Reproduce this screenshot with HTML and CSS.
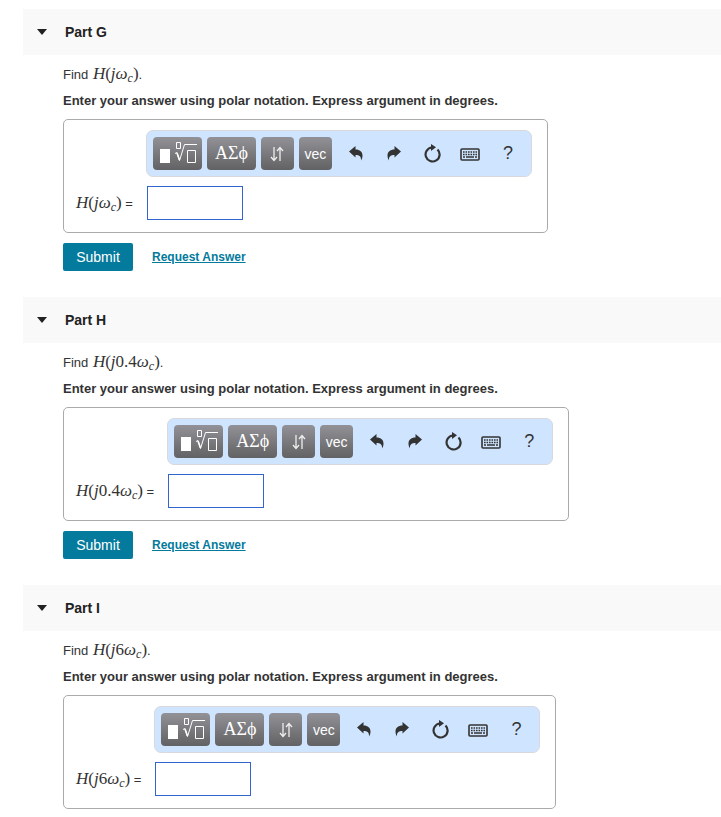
FILE: index.html
```html
<!DOCTYPE html>
<html lang="en">
<head>
<meta charset="utf-8">
<meta name="viewport" content="width=device-width, initial-scale=1">
<title>Transfer function</title>
<link rel="stylesheet" href="styles.css">
</head>
<body>
<svg width="0" height="0" class="sprite" aria-hidden="true">
  <symbol id="i-root" viewBox="0 0 39 25">
    <rect x="2" y="8" width="10" height="14" fill="#fff"/>
    <path d="M18.500 1.500h4v6h-4zM29.500 9.500h8v12h-8zM17 12.500l2-1 2.500 8L26.500 3.500H39" fill="none" stroke="#fff"/>
    <path d="M19 12l2.500 7" stroke="#fff" stroke-width="1.600"/>
  </symbol>
  <symbol id="i-arrows" viewBox="0 0 16 18">
    <path d="M5 2v13M2 12l3 3.500L8 12M11 16V3M8 6l3-3.500L14 6" fill="none" stroke="#eee" stroke-width="1.300"/>
  </symbol>
  <symbol id="i-undo" viewBox="0 0 18 18">
    <path d="M2 6.500L8.500 1v3.500c4.500 0 7 2.500 7 6 0 2-.5 3.500-1.500 5 .3-4-1.500-5.500-5.500-5.500v2.500z"/>
  </symbol>
  <symbol id="i-reset" viewBox="0 0 18 20">
    <path d="M14.500 5.500A7 7 0 1 1 9 3.500" fill="none" stroke="#333" stroke-width="2.200"/>
    <path d="M8 0l5 3.300L8 7z"/>
  </symbol>
  <symbol id="i-keys" viewBox="0 0 20 14">
    <rect x="1" y="2" width="18" height="11" rx="1" fill="none" stroke="#333" stroke-width="1.600"/>
    <path d="M3 5h14M3 7.500h14" stroke="#333" stroke-width="1.400" stroke-dasharray="1.600 .9"/>
    <path d="M3 10h2M6 10h8M15 10h2" stroke="#333" stroke-width="1.500"/>
  </symbol>
</svg>
<main id="parts"></main>
<template id="part">
  <section class="part">
    <h2 class="part-head"><button type="button" class="toggle"><span class="caret"></span><span class="part-name"></span></button></h2>
    <div class="part-body">
      <p class="find">Find <span class="math"></span>.</p>
      <p class="hint">Enter your answer using polar notation. Express argument in degrees.</p>
      <div class="answer">
        <div class="toolbar">
          <button type="button" class="key wide" aria-label="Templates"><svg width="39" height="25"><use href="#i-root"/></svg></button>
          <button type="button" class="key wide greek">ΑΣϕ</button>
          <button type="button" class="key" aria-label="Subscript and superscript"><svg width="16" height="18"><use href="#i-arrows"/></svg></button>
          <button type="button" class="key">vec</button>
          <div class="tools">
            <button type="button" class="tool" aria-label="Undo"><svg width="18" height="18"><use href="#i-undo"/></svg></button>
            <button type="button" class="tool" aria-label="Redo"><svg class="flip" width="18" height="18"><use href="#i-undo"/></svg></button>
            <button type="button" class="tool" aria-label="Reset"><svg width="18" height="20"><use href="#i-reset"/></svg></button>
            <button type="button" class="tool" aria-label="Keyboard"><svg width="20" height="14"><use href="#i-keys"/></svg></button>
            <button type="button" class="tool">?</button>
          </div>
        </div>
        <label class="lhs"><span class="math"></span> =</label>
        <input class="entry" type="text">
      </div>
    </div>
  </section>
</template>
<template id="actions">
  <div class="actions">
    <button type="button" class="submit">Submit</button>
    <a class="request" href="#">Request Answer</a>
  </div>
</template>
<script src="parts.js"></script>
</body>
</html>
```
FILE: parts.js
```js
const parts = [["G", "", true], ["H", "0.4", true], ["I", "6", false]];
const template = document.getElementById("part");
const actions = document.getElementById("actions");
for (const [name, factor, hasActions] of parts) {
  const node = template.content.cloneNode(true);
  node.querySelector(".part-name").textContent = "Part " + name;
  for (const math of node.querySelectorAll(".math")) {
    math.innerHTML = `<i>H</i>(<i>j</i>${factor}<i>ω</i><sub>c</sub>)`;
  }
  node.querySelector(".entry").id = "answer-" + name;
  node.querySelector(".lhs").htmlFor = "answer-" + name;
  if (hasActions) {
    node.querySelector(".part-body").append(actions.content.cloneNode(true));
  }
  document.getElementById("parts").append(node);
}
```
FILE: styles.css
```css
* { box-sizing: border-box; }
body {
  margin: 0;
  padding: 9px 0 0 23px;
  font: 13px/18px "Liberation Sans", Arial, sans-serif;
  color: #333;
  background: #fff;
}
button { font-family: inherit; border: 0; padding: 0; cursor: pointer; }
.sprite { position: absolute; }
.part { margin-bottom: 26px; }
.part:last-child { margin-bottom: 0; }
.part-head { margin: 0; background: #f9f9f9; }
.toggle {
  display: flex;
  align-items: center;
  gap: 18px;
  width: 100%;
  height: 46px;
  padding-left: 14px;
  background: none;
  color: #222;
  font-size: 14px;
  font-weight: bold;
}
.caret { border: solid transparent; border-width: 6px 5px 0; border-top-color: #222; }
.part-body { padding: 10px 0 0 40px; }
p { margin: 0; }
.find { height: 20px; line-height: 20px; }
.hint { margin: 6px 0 8px; font-weight: bold; line-height: 20px; }
.math { font-family: "Liberation Serif", "Times New Roman", serif; font-size: 17px; line-height: 18px; }
.math sub { font-size: 12px; font-style: italic; line-height: 1px; vertical-align: -3px; }
.find .math { margin-left: 1px; }
.answer {
  display: inline-grid;
  grid-template-columns: auto auto;
  align-items: center;
  gap: 9px 13px;
  padding: 10px 15px 12px 12px;
  border: 1px solid #aaa;
  border-radius: 5px;
  vertical-align: top;
}
.toolbar {
  grid-column: 2;
  display: flex;
  align-items: center;
  gap: 5px;
  height: 47px;
  padding: 0 4px 0 6px;
  border: 1px solid #d9d9dd;
  border-radius: 7px;
  background: #cfe5ff;
}
.key {
  display: flex;
  align-items: center;
  justify-content: center;
  width: 33px;
  height: 33px;
  border-radius: 4px;
  background: linear-gradient(#929197, #626264);
  color: #fff;
  font-size: 14px;
}
.wide { width: 49px; }
.greek { font-family: "Liberation Serif", "Times New Roman", serif; font-size: 18px; }
.tools { display: flex; }
.tool {
  display: flex;
  align-items: center;
  justify-content: center;
  width: 38px;
  height: 33px;
  background: none;
  color: #333;
  fill: #333;
  font-size: 18px;
}
.flip { transform: scaleX(-1); }
.lhs { white-space: nowrap; }
.entry { margin-left: 1px; width: 96px; height: 34px; border: 1px solid #36c; background: #fff; padding: 4px; font-size: 16px; }
.actions { display: flex; align-items: center; gap: 19px; margin-top: 10px; }
.submit { width: 70px; height: 28px; border-radius: 2px; background: #047a9c; color: #fff; font-size: 14px; }
.request { color: #047a9c; font-size: 12px; font-weight: bold; }
```
